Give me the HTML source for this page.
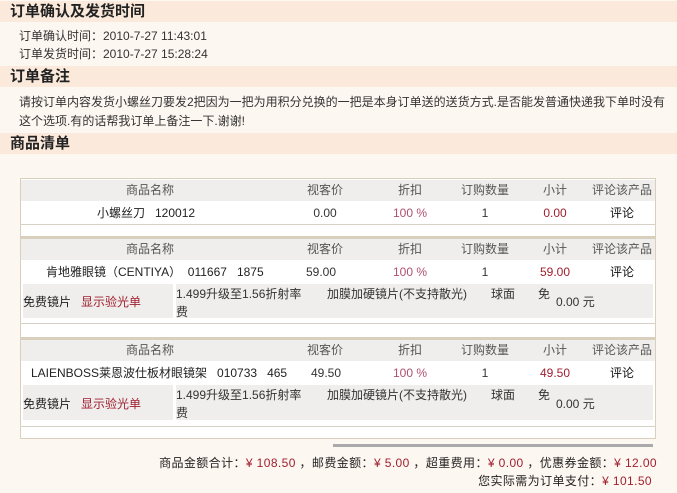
<!DOCTYPE html>
<html><head><meta charset="utf-8"><style>
*{margin:0;padding:0;box-sizing:border-box}
body{width:677px;height:493px;background:#fdf7f1;font-family:"Liberation Sans","Noto Sans CJK SC",sans-serif;font-size:12px;color:#333;position:relative;overflow:hidden}
.a{position:absolute;white-space:nowrap;line-height:14px}
.h{position:absolute;left:0;width:677px;height:21px;background:#fbeadb;font-weight:bold;font-size:15px;color:#222;padding-left:10px;line-height:21px}
.box{position:absolute;left:20px;top:178px;width:636px;height:261px;background:#fff;border:1px solid #d8cfbd}
.g{position:absolute;background:#efeeec}
.ln{position:absolute;left:20px;width:636px;height:1px;background:#d8d2c6}
.tl{position:absolute;left:20px;width:636px;height:3px;background:#d8cfbd}
.c{position:absolute;text-align:center;line-height:14px;white-space:nowrap}
.r{color:#a02030}.p{color:#b05070}
</style></head><body>
<div class="h" style="top:1px">订单确认及发货时间</div>
<div class="a" style="left:19px;top:29px">订单确认时间：2010-7-27 11:43:01</div>
<div class="a" style="left:19px;top:47px">订单发货时间：2010-7-27 15:28:24</div>
<div class="h" style="top:66px">订单备注</div>
<div class="a" style="left:19px;top:95px">请按订单内容发货小螺丝刀要发2把因为一把为用积分兑换的一把是本身订单送的送货方式.是否能发普通快递我下单时没有</div>
<div class="a" style="left:19px;top:114px">这个选项.有的话帮我订单上备注一下.谢谢!</div>
<div class="h" style="top:133px">商品清单</div>

<div class="box"></div>
<div class="g" style="left:21px;top:180px;width:634px;height:21px"></div>
<div class="ln" style="top:224px"></div>
<div class="tl" style="top:236px"></div>
<div class="g" style="left:21px;top:239px;width:634px;height:21px"></div>
<div class="g" style="left:23px;top:284px;width:150px;height:34px"></div>
<div class="g" style="left:176px;top:284px;width:477px;height:34px"></div>
<div class="ln" style="top:323px"></div>
<div class="tl" style="top:337px"></div>
<div class="g" style="left:21px;top:340px;width:634px;height:21px"></div>
<div class="g" style="left:23px;top:385px;width:150px;height:35px"></div>
<div class="g" style="left:176px;top:385px;width:477px;height:35px"></div>
<div class="ln" style="top:426px"></div>

<div class="c" style="left:100px;top:183px;width:100px;color:#555">商品名称</div>
<div class="c" style="left:295px;top:183px;width:60px;color:#555">视客价</div>
<div class="c" style="left:380px;top:183px;width:60px;color:#555">折扣</div>
<div class="c" style="left:455px;top:183px;width:60px;color:#555">订购数量</div>
<div class="c" style="left:525px;top:183px;width:60px;color:#555">小计</div>
<div class="c" style="left:588px;top:183px;width:68px;color:#555">评论该产品</div>
<div class="a" style="left:97px;top:206px;color:#222">小螺丝刀&nbsp;&nbsp;&nbsp;120012</div>
<div class="c" style="left:295px;top:206px;width:60px">0.00</div>
<div class="c p" style="left:380px;top:206px;width:60px">100 %</div>
<div class="c" style="left:455px;top:206px;width:60px;color:#333">1</div>
<div class="c r" style="left:525px;top:206px;width:60px">0.00</div>
<div class="c" style="left:588px;top:206px;width:68px;color:#111">评论</div>

<div class="c" style="left:100px;top:242px;width:100px;color:#555">商品名称</div>
<div class="c" style="left:295px;top:242px;width:60px;color:#555">视客价</div>
<div class="c" style="left:380px;top:242px;width:60px;color:#555">折扣</div>
<div class="c" style="left:455px;top:242px;width:60px;color:#555">订购数量</div>
<div class="c" style="left:525px;top:242px;width:60px;color:#555">小计</div>
<div class="c" style="left:588px;top:242px;width:68px;color:#555">评论该产品</div>
<div class="a" style="left:46px;top:265px;color:#222">肯地雅眼镜（CENTIYA）&nbsp;&nbsp;011667&nbsp;&nbsp;&nbsp;1875</div>
<div class="a" style="left:306px;top:265px">59.00</div>
<div class="c p" style="left:380px;top:265px;width:60px">100 %</div>
<div class="c" style="left:455px;top:265px;width:60px">1</div>
<div class="c r" style="left:525px;top:265px;width:60px">59.00</div>
<div class="c" style="left:588px;top:265px;width:68px;color:#111">评论</div>
<div class="a" style="left:23px;top:295px;color:#222">免费镜片&nbsp;&nbsp;&nbsp;<span class="r">显示验光单</span></div>
<div class="a" style="left:176px;top:287px">1.499升级至1.56折射率</div>
<div class="a" style="left:176px;top:305px">费</div>
<div class="a" style="left:327px;top:287px">加膜加硬镜片(不支持散光)</div>
<div class="a" style="left:491px;top:287px">球面</div>
<div class="a" style="left:538px;top:287px">免</div>
<div class="a" style="left:556px;top:295px">0.00 元</div>

<div class="c" style="left:100px;top:343px;width:100px;color:#555">商品名称</div>
<div class="c" style="left:295px;top:343px;width:60px;color:#555">视客价</div>
<div class="c" style="left:380px;top:343px;width:60px;color:#555">折扣</div>
<div class="c" style="left:455px;top:343px;width:60px;color:#555">订购数量</div>
<div class="c" style="left:525px;top:343px;width:60px;color:#555">小计</div>
<div class="c" style="left:588px;top:343px;width:68px;color:#555">评论该产品</div>
<div class="a" style="left:31px;top:366px;color:#222">LAIENBOSS莱恩波仕板材眼镜架&nbsp;&nbsp;&nbsp;010733&nbsp;&nbsp;&nbsp;465</div>
<div class="a" style="left:311px;top:366px">49.50</div>
<div class="c p" style="left:380px;top:366px;width:60px">100 %</div>
<div class="c" style="left:455px;top:366px;width:60px">1</div>
<div class="c r" style="left:525px;top:366px;width:60px">49.50</div>
<div class="c" style="left:588px;top:366px;width:68px;color:#111">评论</div>
<div class="a" style="left:23px;top:397px;color:#222">免费镜片&nbsp;&nbsp;&nbsp;<span class="r">显示验光单</span></div>
<div class="a" style="left:176px;top:388px">1.499升级至1.56折射率</div>
<div class="a" style="left:176px;top:406px">费</div>
<div class="a" style="left:327px;top:388px">加膜加硬镜片(不支持散光)</div>
<div class="a" style="left:491px;top:388px">球面</div>
<div class="a" style="left:538px;top:388px">免</div>
<div class="a" style="left:556px;top:397px">0.00 元</div>

<div style="position:absolute;left:333px;top:444px;width:320px;height:3px;background:#aaa"></div>
<div class="a" style="right:20px;top:456px;color:#222;letter-spacing:0.4px">商品金额合计：<span class="r">¥ 108.50</span> ，邮费金额：<span class="r">¥ 5.00</span> ，超重费用：<span class="r">¥ 0.00</span> ，优惠券金额：<span class="r">¥ 12.00</span></div>
<div class="a" style="right:25px;top:474px;color:#222;letter-spacing:0.4px">您实际需为订单支付：<span class="r">¥ 101.50</span></div>
</body></html>
